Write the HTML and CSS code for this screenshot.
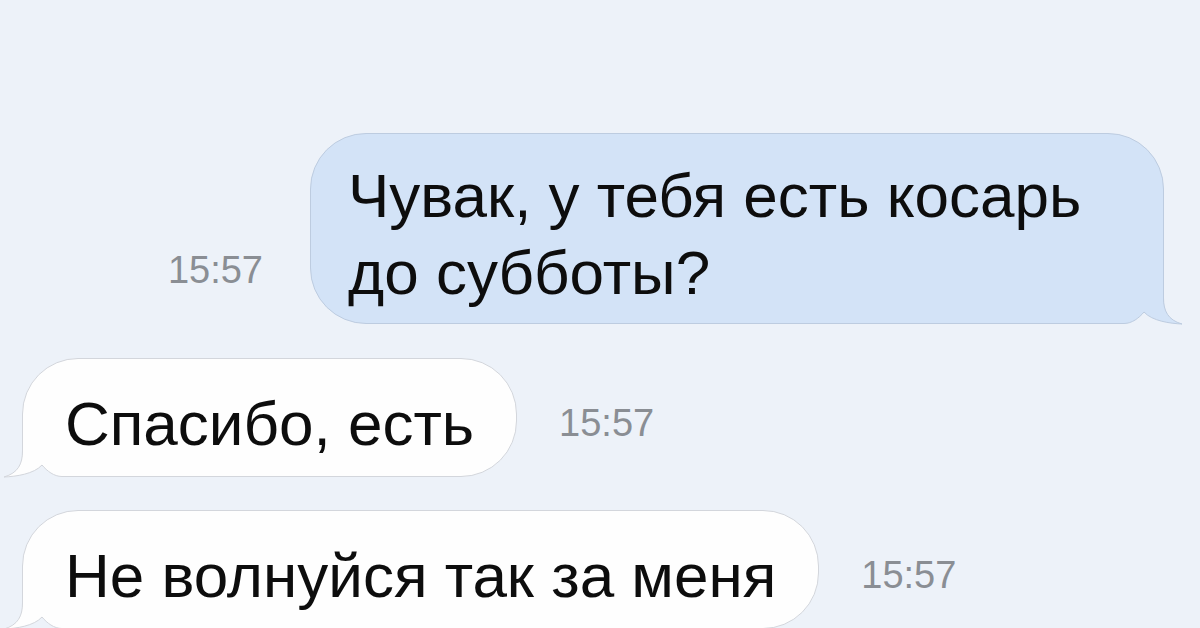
FILE: index.html
```html
<!DOCTYPE html>
<html lang="ru">
<head>
  <meta charset="UTF-8">
  <title>Сообщения</title>
  <link rel="stylesheet" href="styles.css">
</head>
<body>
  <div class="chat">
    <div class="row row-out">
      <span class="time">15:57</span>
      <div class="bubble bubble-out">
        Чувак, у тебя есть косарь<br>до субботы?
        <svg class="tail" width="64" height="42" viewBox="0 0 64 42">
          <rect class="tail-cover" x="0" y="20" width="42" height="22"/>
          <path class="tail-fill" d="M0 8H39.5V14C39.5 27 44 36 58 40C46 39.5 28 37 20 28C15 34 8 39.5 0 39.5Z"/>
          <path class="tail-line" d="M39.5 8V14C39.5 27 44 36 58 40C46 39.5 28 37 20 28C15 34 8 39.5 0 39.5"/>
        </svg>
      </div>
    </div>

    <div class="row row-in">
      <div class="bubble bubble-in">
        Спасибо, есть
        <svg class="tail" width="64" height="42" viewBox="0 0 64 42">
          <rect class="tail-cover" x="0" y="20" width="42" height="22"/>
          <path class="tail-fill" d="M0 8H39.5V14C39.5 27 44 36 58 40C46 39.5 28 37 20 28C15 34 8 39.5 0 39.5Z"/>
          <path class="tail-line" d="M39.5 8V14C39.5 27 44 36 58 40C46 39.5 28 37 20 28C15 34 8 39.5 0 39.5"/>
        </svg>
      </div>
      <span class="time">15:57</span>
    </div>

    <div class="row row-in">
      <div class="bubble bubble-in">
        Не волнуйся так за меня
        <svg class="tail" width="64" height="42" viewBox="0 0 64 42">
          <rect class="tail-cover" x="0" y="20" width="42" height="22"/>
          <path class="tail-fill" d="M0 8H39.5V14C39.5 27 44 36 58 40C46 39.5 28 37 20 28C15 34 8 39.5 0 39.5Z"/>
          <path class="tail-line" d="M39.5 8V14C39.5 27 44 36 58 40C46 39.5 28 37 20 28C15 34 8 39.5 0 39.5"/>
        </svg>
      </div>
      <span class="time">15:57</span>
    </div>
  </div>
</body>
</html>
```

FILE: styles.css
```css
html, body {
  margin: 0;
  height: 100%;
  overflow: hidden;
}
body {
  font-family: "Liberation Sans", Arial, sans-serif;
  background-color: #edf2f9;
  color: #0d0d0d;
}
.chat {
  display: flex;
  flex-direction: column;
  gap: 33px;
  padding: 133px 36px 0 22px;
}
.row {
  display: flex;
  align-items: flex-end;
}
.row-out {
  justify-content: flex-end;
  gap: 47px;
  margin-bottom: 1px;
}
.row-in {
  gap: 42px;
}
.time {
  font-size: 38px;
  line-height: 1;
  color: #8a8e94;
  margin-bottom: 35px;
}
.bubble {
  position: relative;
  box-sizing: border-box;
  font-size: 62px;
  line-height: 77px;
  border: 1px solid;
  border-radius: 56px;
}
.bubble-out {
  width: 854px;
  padding: 23px 40px 12px 37px;
  background-color: #d3e3f7;
  border-color: #bdcce0;
  border-bottom-right-radius: 0;
}
.bubble-in {
  padding: 26px 42px 14px 42px;
  background-color: #fefefe;
  border-color: #d3d6dc;
  border-bottom-left-radius: 0;
}
.tail {
  position: absolute;
  bottom: -3px;
}
.bubble-out .tail {
  right: -25px;
}
.bubble-in .tail {
  left: -25px;
  transform: scaleX(-1);
}
.tail-cover {
  fill: #edf2f9;
}
.tail-line {
  fill: none;
  stroke-width: 1;
}
.bubble-out .tail-fill {
  fill: #d3e3f7;
}
.bubble-out .tail-line {
  stroke: #bdcce0;
}
.bubble-in .tail-fill {
  fill: #fefefe;
}
.bubble-in .tail-line {
  stroke: #d3d6dc;
}
```
